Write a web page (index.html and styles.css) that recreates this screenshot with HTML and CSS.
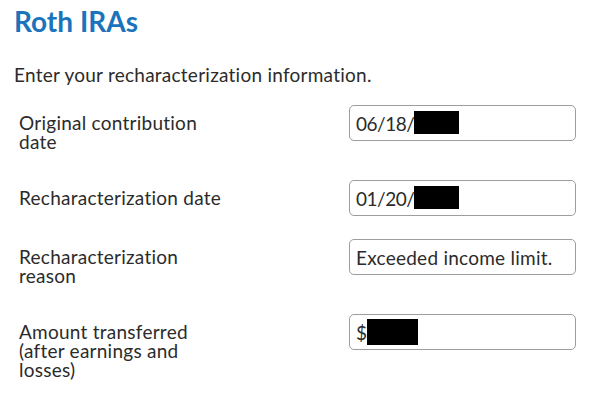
FILE: index.html
```html
<!DOCTYPE html>
<html lang="en">
<head>
    <meta charset="UTF-8">
    <meta name="viewport" content="width=device-width, initial-scale=1.0">
    <title>Roth IRAs</title>
    <link rel="stylesheet" href="styles.css">
</head>
<body>
    <div class="page">
        <h1 class="page-title">Roth IRAs</h1>
        <p class="intro">Enter your recharacterization information.</p>

        <div class="form">
            <div class="form-row">
                <div class="form-label">Original contribution<br>date</div>
                <div class="field field-date">06/18/<span class="redacted"></span></div>
            </div>
            <div class="form-row">
                <div class="form-label">Recharacterization date</div>
                <div class="field field-date">01/20/<span class="redacted"></span></div>
            </div>
            <div class="form-row">
                <div class="form-label">Recharacterization<br>reason</div>
                <div class="field">Exceeded income limit.</div>
            </div>
            <div class="form-row">
                <div class="form-label">Amount transferred<br>(after earnings and<br>losses)</div>
                <div class="field">$<span class="redacted wide"></span></div>
            </div>
        </div>
    </div>
</body>
</html>
```

FILE: styles.css
```css
* {
    margin: 0;
    padding: 0;
    box-sizing: border-box;
}

body {
    background: #fff;
    font-family: 'Lato', 'Liberation Sans', sans-serif;
    color: #2b2b2b;
}

.page {
    padding: 4px 14px 0;
}

.page-title {
    font-size: 28px;
    line-height: 34px;
    font-weight: 700;
    color: #1b74bb;
}

.intro {
    margin-top: 26px;
    font-size: 19px;
    line-height: 22px;
    letter-spacing: 0.25px;
}

.form {
    margin-top: 19px;
    padding-left: 5px;
}

.form-row {
    display: flex;
    align-items: flex-start;
    margin-bottom: 23px;
}

.form-label {
    width: 330px;
    padding: 8px 0 6px;
    font-size: 19px;
    line-height: 19px;
    letter-spacing: 0.25px;
}

.field {
    width: 227px;
    height: 36px;
    border: 1px solid #9d9d9d;
    border-radius: 5px;
    padding: 0 6px;
    display: flex;
    align-items: center;
    font-size: 19px;
    letter-spacing: 0.25px;
}

.field-date {
    letter-spacing: -0.5px;
}

.redacted {
    display: inline-block;
    width: 45px;
    height: 23px;
    margin-top: -2px;
    background: #000;
}

.redacted.wide {
    width: 51px;
    height: 26px;
    margin-top: 0;
}
```
